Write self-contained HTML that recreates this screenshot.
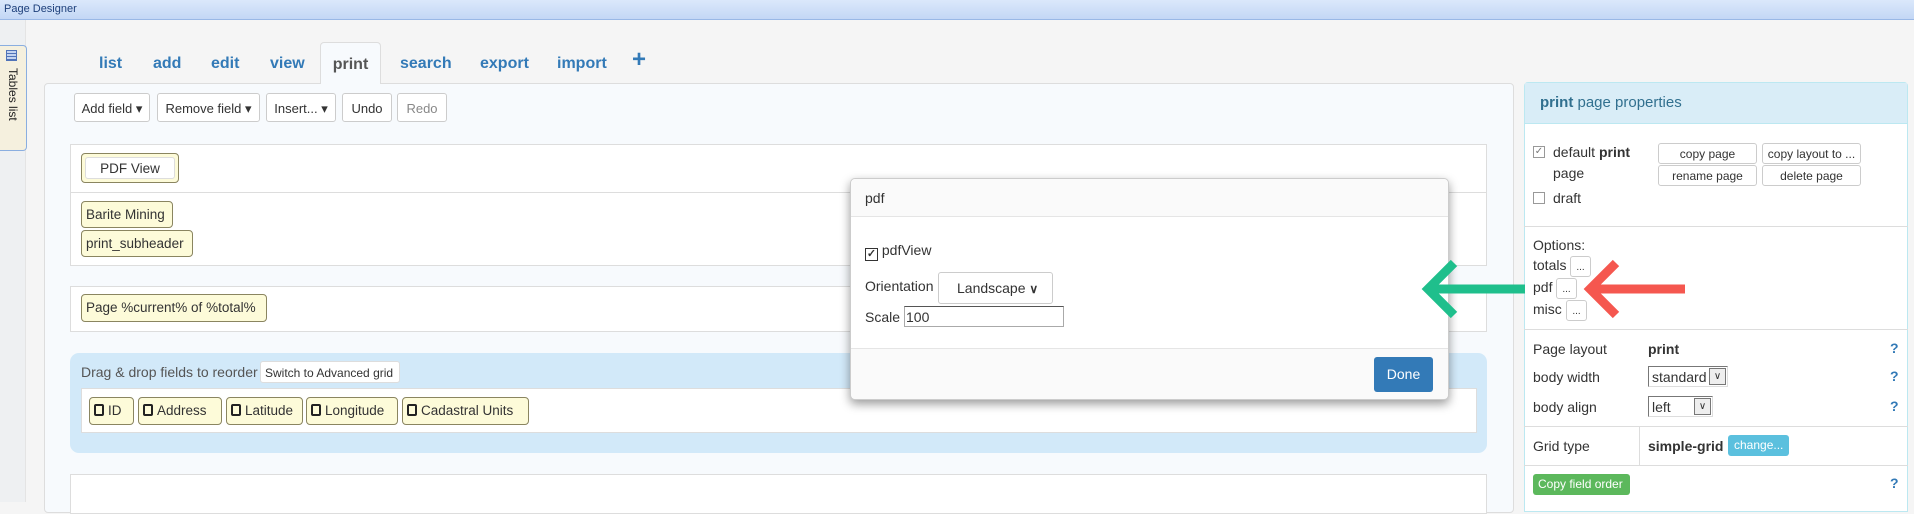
<!DOCTYPE html>
<html><head><meta charset="utf-8"><style>
*{box-sizing:border-box;margin:0;padding:0}
body{width:1914px;height:502px;overflow:hidden;background:#f5f5f5;font-family:"Liberation Sans",Arial,sans-serif;font-size:14px;color:#333;position:relative}
.a{position:absolute;white-space:nowrap}
.title{left:0;top:0;width:1914px;height:20px;background:linear-gradient(#dbe8fb,#c3d7f5);border-bottom:1px solid #99b8e6;font-size:11px;color:#1d3f7a;padding:3px 4px}
.side{left:0;top:20px;width:26px;height:482px;background:#eef0f2;border-right:1px solid #e4e4e4}
.tabl{left:0;top:45px;width:27px;height:106px;background:#f5f0de;border:1px solid #8aaee0;border-left:none;border-radius:0 4px 4px 0}
.tab{top:55px;font-weight:bold;font-size:16px;color:#337ab7}
.ptab{left:320px;top:42px;width:61px;height:42px;background:#f7fafd;border:1px solid #ddd;border-bottom:none;border-radius:4px 4px 0 0;font-weight:bold;font-size:16px;color:#555;text-align:center;padding-top:13px}
.main{left:44px;top:83px;width:1470px;height:430px;background:#f7fafd;border:1px solid #ddd;border-radius:4px}
.btn{background:#fff;border:1px solid #ccc;border-radius:3px;font-size:13px;text-align:center;height:29px;padding-top:7px}
.box{background:#fff;border:1px solid #ddd}
.tag{background:#fdfbd9;border:1px solid #8a8560;border-radius:4px;font-size:13.5px;padding:5px 4px;height:27px}
.cb{display:inline-block;width:10px;height:12px;border:2px solid #222;border-radius:2px;vertical-align:-1px;margin-right:4px}
.rp{left:1524px;top:82px;width:384px;height:430px;background:#fff;border:1px solid #bce8f1;border-radius:4px 4px 0 0}
.sbtn{background:#fff;border:1px solid #ccc;border-radius:3px;font-size:12px;text-align:center;height:21px;padding-top:3px}
.dot{background:#fff;border:1px solid #ccc;border-radius:3px;width:21px;height:21px;font-size:10px;text-align:center;padding-top:5px}
.q{color:#337ab7;font-weight:bold;font-size:14px;left:1890px}
.hl{height:1px;background:#ddd;left:1524px;width:384px}
</style></head><body>
<div class="a title">Page Designer</div>
<div class="a side"></div>
<div class="a tabl"><div style="position:absolute;left:6px;top:4px;width:11px;height:11px;border:1px solid #5073b8;background:repeating-linear-gradient(#c4d4f0 0 2px,#5073b8 2px 3px)"></div><div style="position:absolute;left:6px;top:22px;writing-mode:vertical-rl;font-size:12px;white-space:nowrap;color:#222">Tables list</div></div>
<div class="a tab" style="left:99px">list</div>
<div class="a tab" style="left:153px">add</div>
<div class="a tab" style="left:211px">edit</div>
<div class="a tab" style="left:270px">view</div>
<div class="a tab" style="left:400px">search</div>
<div class="a tab" style="left:480px">export</div>
<div class="a tab" style="left:557px">import</div>
<div class="a tab" style="left:632px;top:46px;font-size:24px">+</div>
<div class="a main"></div>
<div class="a ptab">print</div>
<div class="a btn" style="left:74px;top:93px;width:76px">Add field ▾</div>
<div class="a btn" style="left:157px;top:93px;width:103px">Remove field ▾</div>
<div class="a btn" style="left:266px;top:93px;width:70px">Insert... ▾</div>
<div class="a btn" style="left:342px;top:93px;width:50px">Undo</div>
<div class="a btn" style="left:397px;top:93px;width:50px;color:#888">Redo</div>
<div class="a box" style="left:70px;top:144px;width:1417px;height:122px"></div>
<div class="a" style="left:70px;top:192px;width:1417px;height:1px;background:#ddd"></div>
<div class="a tag" style="left:81px;top:153px;width:98px;height:30px;padding:3px"><div style="background:#fff;border:1px solid #ddd;border-radius:3px;height:22px;text-align:center;padding-top:3px">PDF View</div></div>
<div class="a tag" style="left:81px;top:201px;width:92px">Barite Mining</div>
<div class="a tag" style="left:81px;top:230px;width:112px">print_subheader</div>
<div class="a box" style="left:70px;top:286px;width:1417px;height:46px"></div>
<div class="a tag" style="left:81px;top:294px;width:186px;height:28px">Page %current% of %total%</div>
<div class="a" style="left:70px;top:353px;width:1417px;height:100px;background:#d2e9f9;border-radius:9px"></div>
<div class="a" style="left:81px;top:364px;color:#555">Drag &amp; drop fields to reorder</div>
<div class="a" style="left:260px;top:361px;width:140px;height:22px;background:#fff;border:1px solid #ddd;border-radius:3px;font-size:12px;padding:4px 4px">Switch to Advanced grid</div>
<div class="a box" style="left:81px;top:388px;width:1396px;height:45px"></div>
<div class="a tag" style="left:89px;top:397px;width:45px;height:28px"><span class="cb"></span>ID</div>
<div class="a tag" style="left:138px;top:397px;width:84px;height:28px"><span class="cb"></span>Address</div>
<div class="a tag" style="left:226px;top:397px;width:77px;height:28px"><span class="cb"></span>Latitude</div>
<div class="a tag" style="left:306px;top:397px;width:92px;height:28px"><span class="cb"></span>Longitude</div>
<div class="a tag" style="left:402px;top:397px;width:127px;height:28px"><span class="cb"></span>Cadastral Units</div>
<div class="a box" style="left:70px;top:474px;width:1417px;height:40px"></div>
<div class="a" style="left:850px;top:178px;width:599px;height:222px;background:#fff;border:1px solid #ccc;border-radius:5px;box-shadow:0 4px 10px rgba(0,0,0,.4)">
<div style="height:38px;border-bottom:1px solid #e5e5e5;background:#fafafa;border-radius:5px 5px 0 0;padding:11px 14px">pdf</div>
<div class="a" style="left:14px;top:63px"><span style="display:inline-block;width:13px;height:13px;border:1px solid #333;vertical-align:-2px;font-size:11px;line-height:11px;text-align:center;font-weight:bold">✓</span> pdfView</div>
<div class="a" style="left:14px;top:99px">Orientation</div>
<div class="a" style="left:87px;top:93px;width:115px;height:32px;border:1px solid #ccc;border-radius:3px;padding:7px 18px;font-size:14px">Landscape <b style="font-size:12px">&#x2228;</b></div>
<div class="a" style="left:14px;top:130px">Scale</div>
<div class="a" style="left:53px;top:127px;width:160px;height:21px;border:1px solid #aaa;border-top-color:#555;padding:2px 1px">100</div>
<div class="a" style="left:0;top:169px;width:597px;height:1px;background:#e5e5e5"></div>
<div class="a" style="left:0;top:170px;width:597px;height:50px;background:#fafafa;border-radius:0 0 5px 5px"></div>
<div class="a" style="left:523px;top:178px;width:59px;height:35px;background:#337ab7;border-radius:3px;color:#fff;text-align:center;padding-top:9px">Done</div>
</div>
<div class="a rp"></div>
<div class="a" style="left:1525px;top:83px;width:382px;height:41px;background:#d9edf7;border-bottom:1px solid #bce8f1;color:#31708f;font-size:15px;padding:11px 15px"><b>print</b> page properties</div>
<div class="a" style="left:1533px;top:146px;width:12px;height:12px;border:1px solid #999;font-size:10px;line-height:10px;text-align:center;color:#777">✓</div>
<div class="a" style="left:1553px;top:144px">default <b>print</b></div>
<div class="a" style="left:1553px;top:165px">page</div>
<div class="a" style="left:1533px;top:192px;width:12px;height:12px;border:1px solid #999"></div>
<div class="a" style="left:1553px;top:190px">draft</div>
<div class="a sbtn" style="left:1658px;top:143px;width:99px">copy page</div>
<div class="a sbtn" style="left:1762px;top:143px;width:99px">copy layout to ...</div>
<div class="a sbtn" style="left:1658px;top:165px;width:99px">rename page</div>
<div class="a sbtn" style="left:1762px;top:165px;width:99px">delete page</div>
<div class="a hl" style="top:226px"></div>
<div class="a" style="left:1533px;top:237px">Options:</div>
<div class="a" style="left:1533px;top:257px">totals</div><div class="a dot" style="left:1570px;top:256px">...</div>
<div class="a" style="left:1533px;top:279px">pdf</div><div class="a dot" style="left:1556px;top:278px">...</div>
<div class="a" style="left:1533px;top:301px">misc</div><div class="a dot" style="left:1566px;top:300px">...</div>
<div class="a hl" style="top:329px"></div>
<div class="a" style="left:1533px;top:341px">Page layout</div><div class="a" style="left:1648px;top:341px;font-weight:bold">print</div><div class="a q" style="top:340px">?</div>
<div class="a" style="left:1533px;top:369px">body width</div>
<div class="a" style="left:1648px;top:366px;width:80px;height:21px;border:1px solid #777;border-right-color:#ddd;border-bottom-color:#ddd;padding:2px 3px;font-size:14px">standard<span style="position:absolute;right:1px;top:1px;width:17px;height:17px;border:1px solid #777;background:#eee;text-align:center;font-size:10px;line-height:15px">&#x2228;</span></div><div class="a q" style="top:368px">?</div>
<div class="a" style="left:1533px;top:399px">body align</div>
<div class="a" style="left:1648px;top:396px;width:65px;height:21px;border:1px solid #777;border-right-color:#ddd;border-bottom-color:#ddd;padding:2px 3px;font-size:14px">left<span style="position:absolute;right:1px;top:1px;width:17px;height:17px;border:1px solid #777;background:#eee;text-align:center;font-size:10px;line-height:15px">&#x2228;</span></div><div class="a q" style="top:398px">?</div>
<div class="a hl" style="top:426px"></div>
<div class="a" style="left:1639px;top:426px;width:1px;height:39px;background:#ddd"></div>
<div class="a" style="left:1533px;top:438px">Grid type</div>
<div class="a" style="left:1648px;top:438px;font-weight:bold">simple-grid</div>
<div class="a" style="left:1728px;top:435px;width:61px;height:21px;background:#5bc0de;border-radius:3px;color:#fff;font-size:12px;padding:3px 6px">change...</div>
<div class="a hl" style="top:465px"></div>
<div class="a" style="left:1533px;top:474px;width:97px;height:21px;background:#5cb85c;border-radius:3px;color:#fff;font-size:12px;padding:3px 5px">Copy field order</div><div class="a q" style="top:475px">?</div>
<svg class="a" style="left:0;top:0" width="1914" height="502"><g fill="none" stroke-width="9"><path d="M1525 289H1428M1454 263L1428 289L1454 315" stroke="#1fbf8c"/><path d="M1685 289H1590M1616 263L1590 289L1616 315" stroke="#f5574f"/></g></svg>
</body></html>
